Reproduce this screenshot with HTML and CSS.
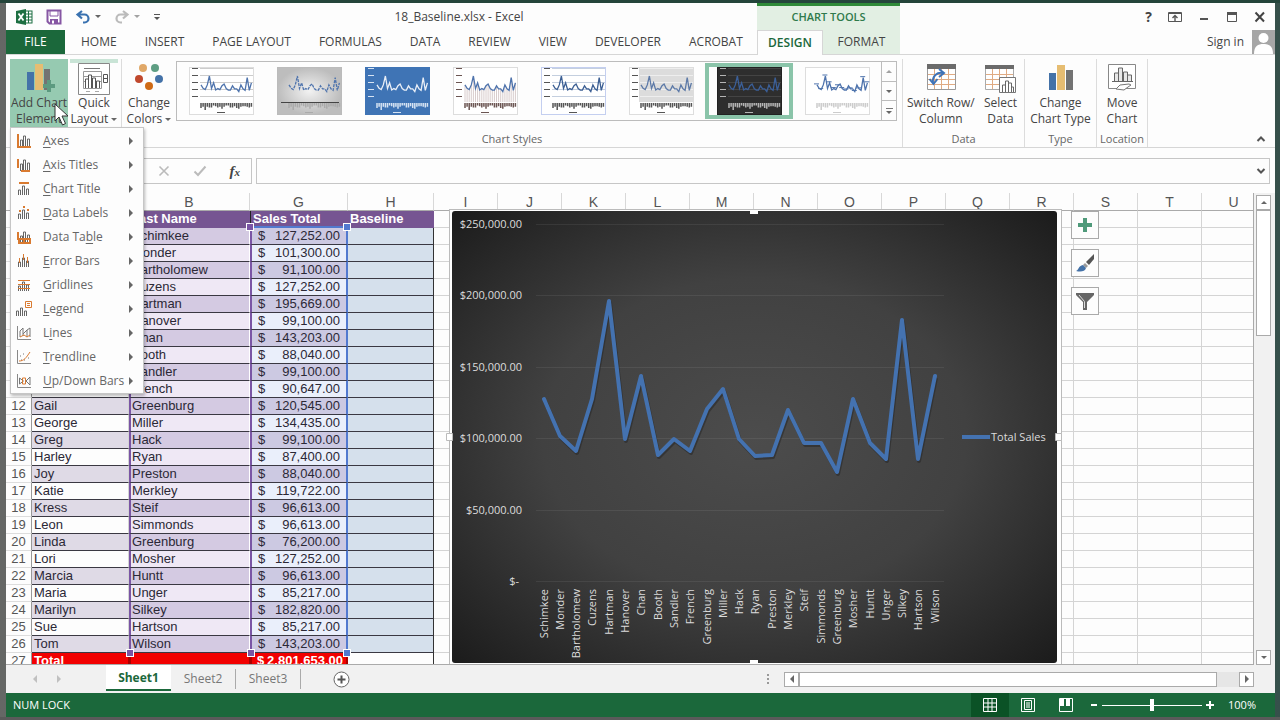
FILE: index.html
```html
<!DOCTYPE html>
<html lang="en">
<head>
<meta charset="utf-8">
<title>18_Baseline.xlsx - Excel</title>
<link rel="stylesheet" href="styles.css">
</head>
<body>
<div class="window">
  <header class="header">
    <div class="titlebar">
      <div class="quick">
        <svg class="app-icon" width="17" height="16" viewBox="0 0 17 16"><rect x="8" y="2" width="8" height="12" fill="#fff" stroke="#1d6f42"/><path d="M9 5h7M9 8h7M9 11h7M12.500 2v12" stroke="#1d6f42" fill="none"/><path d="M0 2l10-2v16L0 14z" fill="#1d6f42"/><path d="M2.500 4.500l5 7M7.500 4.500l-5 7" stroke="#fff" stroke-width="1.800"/></svg>
        <button class="tool" aria-label="Save"><svg width="16" height="16" viewBox="0 0 16 16"><path d="M1.500 1.500h13v13h-11l-2-2z" fill="#fff" stroke="#8656a3" stroke-width="2"/><path d="M4 2h8v5H4z" fill="#fff" stroke="#8656a3"/><path d="M4 10h8v5H4z" fill="#8656a3"/><path d="M6 11.500h2v3H6z" fill="#fff"/></svg></button>
        <button class="tool split" aria-label="Undo"><svg width="16" height="14" viewBox="0 0 16 14"><path d="M7 1L2.500 4.500 7 8.500M3 4.500h6.500a4 4 0 0 1 0 8H8" fill="none" stroke="#3a72b0" stroke-width="2.200"/></svg><i class="down"></i></button>
        <button class="tool split muted" aria-label="Redo"><svg width="16" height="14" viewBox="0 0 16 14"><path d="M9 1l4.500 3.500L9 8.500M13 4.500H6.500a4 4 0 0 0 0 8H8" fill="none" stroke="#909090" stroke-width="2.200"/></svg><i class="down"></i></button>
        <button class="tool" aria-label="Customize Quick Access Toolbar"><svg width="8" height="8" viewBox="0 0 8 8"><path d="M1 1.500h6" stroke="#555"/><path d="M1 4h6L4 7z" fill="#555"/></svg></button>
      </div>
      <div class="doc-title">18_Baseline.xlsx - Excel</div>
    </div>
    <div class="context-title">CHART TOOLS</div>
    <div class="window-tools">
      <button aria-label="Help" class="help">?</button>
      <button aria-label="Ribbon Display Options"><svg width="14" height="12" viewBox="0 0 14 12"><path d="M.500 1.500h13v9H.500z" fill="none" stroke="#555"/><path d="M0 2.500h14" stroke="#555"/><path d="M7 10V5M4.500 7L7 4.500 9.500 7" fill="none" stroke="#555" stroke-width="1.400"/></svg></button>
      <button aria-label="Minimize"><svg width="12" height="12" viewBox="0 0 12 12"><path d="M2 8h8" stroke="#555" stroke-width="2"/></svg></button>
      <button aria-label="Restore"><svg width="12" height="12" viewBox="0 0 12 12"><path d="M1.500 2v8.500h9V2" fill="none" stroke="#555"/><path d="M1 2.500h10" stroke="#555" stroke-width="3"/></svg></button>
      <button aria-label="Close"><svg width="12" height="12" viewBox="0 0 12 12"><path d="M1.500 1.500l8.500 9M10 1.500l-8.500 9" stroke="#444" stroke-width="2"/></svg></button>
    </div>
    <nav class="tabs">
      <button class="tab file">FILE</button><button class="tab">HOME</button><button class="tab">INSERT</button><button class="tab">PAGE LAYOUT</button><button class="tab">FORMULAS</button><button class="tab">DATA</button><button class="tab">REVIEW</button><button class="tab">VIEW</button><button class="tab">DEVELOPER</button><button class="tab">ACROBAT</button>
    </nav>
    <nav class="context-tabs"><button class="tab active">DESIGN</button><button class="tab">FORMAT</button></nav>
    <div class="account"><a href="#signin">Sign in</a><svg width="23" height="24" viewBox="0 0 23 24"><path d="M0 0h23v24H0z" fill="#a6a6a6"/><circle cx="11.500" cy="8" r="5" fill="#fff"/><path d="M2 24c0-8 4-10 9.500-10S21 16 21 24z" fill="#fff"/></svg></div>
  </header>

  <section class="ribbon" aria-label="Chart design">
    <div class="group layouts">
      <div class="commands">
        <div class="menu-host">
          <button class="command pressed" aria-haspopup="true" aria-expanded="true"><svg width="32" height="32" viewBox="0 0 32 32"><path d="M4 11h7v18H4z" fill="#4472a8"/><path d="M12 3h8v26h-8z" fill="#e6bd72"/><path d="M21 8h6v21h-6z" fill="#737373"/><path d="M26 19v12M20 25h12" stroke="#5c9a80" stroke-width="4"/></svg><span>Add Chart<br>Element</span></button>
          <ul class="menu" role="menu" id="menu"></ul>
          <svg class="pointer" width="15" height="24" viewBox="0 0 15 24"><path d="M1 1v17l4-4 3.500 8 3-1.500L8 13h6z" fill="#fff" stroke="#333"/></svg>
        </div>
        <button class="command quick-layout"><svg width="32" height="32" viewBox="0 0 32 32"><path d="M.500.500h31v31H.500z" fill="#fff" stroke="#888"/><path d="M6 5.500h16" stroke="#777"/><path d="M5.500 8.500h18v17h-18zM5.500 13.500h18M5.500 18.500h18" fill="none" stroke="#999"/><path d="M7.500 25v-9h3v9M10.500 25V12h3v13M14.500 25V15h3v10M18.500 25v-7h3v7M25.500 11.500h4v8h-4zM26 15.500h3" fill="#fff" stroke="#555"/><path d="M8 28.500h4M17 28.500h4" stroke="#aaa"/></svg><span>Quick<br>Layout <i class="down"></i></span></button>
      </div>
    </div>
    <div class="group styles">
      <div class="commands">
        <button class="command"><svg width="32" height="32" viewBox="0 0 32 32"><circle cx="10" cy="7" r="4" fill="#e0a868"/><circle cx="22" cy="7" r="4" fill="#5e9e83"/><circle cx="6" cy="18" r="4" fill="#c0482d"/><circle cx="26" cy="18" r="4" fill="#4472a8"/><circle cx="16" cy="25" r="4" fill="#cf6a15"/></svg><span>Change<br>Colors <i class="down"></i></span></button>
        <div class="gallery"><div class="swatches" id="gallery"></div>
          <div class="gallery-scroll"><button aria-label="Previous styles" class="muted"><i class="up"></i></button><button aria-label="Next styles"><i class="down"></i></button><button aria-label="More styles"><i class="bar"></i><i class="down"></i></button></div>
        </div>
      </div>
      <div class="group-label">Chart Styles</div>
    </div>
    <div class="group data">
      <div class="commands">
        <button class="command"><svg width="32" height="32" viewBox="0 0 32 32"><path d="M2.500 3.500h28v25h-28z" fill="#fff" stroke="#999"/><path d="M2 3h29v5H2z" fill="#6b6b6b"/><path d="M3 13.500h27M3 18.500h27M3 23.500h27M9.500 8v20M16.500 8v20M23.500 8v20" stroke="#e0ab83"/><path d="M8 22C7 15 12 11 18 12" fill="none" stroke="#3f73b7" stroke-width="2"/><path d="M14 8l5 4-5 4M4.500 18l4 5 4-5" fill="none" stroke="#3f73b7" stroke-width="2"/></svg><span>Switch Row/<br>Column</span></button>
        <button class="command"><svg width="32" height="32" viewBox="0 0 32 32"><path d="M1.500 4.500h28v24h-28z" fill="#fff" stroke="#aaa"/><path d="M1 4h29v4H1z" fill="#6b6b6b"/><path d="M2 13.500h27M2 18.500h27M2 23.500h27M8.500 8v20M15.500 8v20M22.500 8v20" stroke="#e0ab83"/><path d="M15.500 16.500h16v15h-16z" fill="#fff" stroke="#777"/><path d="M18.500 31v-7h3v7M21.500 31V20h3v11M24.500 31v-9h3v9M27.500 31v-5h2v5" fill="#fff" stroke="#666"/></svg><span>Select<br>Data</span></button>
      </div>
      <div class="group-label">Data</div>
    </div>
    <div class="group type">
      <div class="commands"><button class="command"><svg width="32" height="32" viewBox="0 0 32 32"><path d="M4 12h7v17H4z" fill="#4472a8"/><path d="M12 4h8v25h-8z" fill="#e6bd72"/><path d="M21 9h7v20h-7z" fill="#737373"/></svg><span>Change<br>Chart Type</span></button></div>
      <div class="group-label">Type</div>
    </div>
    <div class="group location">
      <div class="commands"><button class="command"><svg width="32" height="32" viewBox="0 0 32 32"><path d="M2.500 3.500h27v24h-27z" fill="#fff" stroke="#888"/><path d="M8.500 20v-8h4v8M12.500 20V7h4v13M17.500 20v-9h4v9M21.500 20v-6h4v6M6 20.500h21" fill="#e8e8e8" stroke="#666"/><path d="M10 28l4-4 9-1 2 1-3 2-4 3z" fill="#fff" stroke="#777"/></svg><span>Move<br>Chart</span></button></div>
      <div class="group-label">Location</div>
    </div>
    <button class="collapse" aria-label="Collapse the ribbon"><svg width="10" height="8" viewBox="0 0 10 8"><path d="M1.500 6L5 2.500 8.500 6" fill="none" stroke="#555" stroke-width="2"/></svg></button>
  </section>

  <div class="formula-bar">
    <div class="formula-tools">
      <button aria-label="Cancel"><svg width="12" height="12" viewBox="0 0 12 12"><path d="M1.500 1.500l9 9M10.500 1.500l-9 9" stroke="#bbb" stroke-width="1.600"/></svg></button>
      <button aria-label="Enter"><svg width="14" height="12" viewBox="0 0 14 12"><path d="M1.500 6.500L5 10l7.500-8.500" fill="none" stroke="#bbb" stroke-width="2"/></svg></button>
      <button aria-label="Insert Function" class="fx">f<small>x</small></button>
    </div>
    <div class="formula-field"><input type="text" aria-label="Formula"><button aria-label="Expand formula bar"><svg width="10" height="8" viewBox="0 0 10 8"><path d="M1.500 2L5 5.500 8.500 2" fill="none" stroke="#555" stroke-width="2"/></svg></button></div>
  </div>

  <main class="workspace">
    <div class="sheet">
      <table class="cells">
        <colgroup><col class="c-num"><col class="c-a"><col class="c-b"><col class="c-g"><col class="c-h"></colgroup>
        <thead><tr id="columns"></tr></thead>
        <tbody id="rows"></tbody>
      </table>
      <figure class="chart" id="chart"></figure>
      <div class="chart-tools">
        <button aria-label="Chart Elements"><svg width="16" height="16" viewBox="0 0 16 16"><path d="M8 1v14M1 8h14" stroke="#4f9a7a" stroke-width="4"/></svg></button>
        <button aria-label="Chart Styles"><svg width="20" height="18" viewBox="0 0 20 18"><path d="M19 0v5l-5 6-3-3z" fill="#555"/><path d="M10 9l3 3-2 2-3-3z" fill="#999"/><path d="M1 17c3-1 2-5 7-6l3 3c-1 4-6 4-10 3z" fill="#4472a8"/></svg></button>
        <button aria-label="Chart Filters"><svg width="18" height="17" viewBox="0 0 18 17"><path d="M0 0h18v2l-7 7v8H7V9L0 2z" fill="#666"/><path d="M3 2l5.500 6.500V15" fill="none" stroke="#ddd"/></svg></button>
      </div>
    </div>
    <div class="vscroll"><button aria-label="Scroll up"><i class="up"></i></button><div class="v-thumb"></div><div class="v-track"></div><button aria-label="Scroll down"><i class="down"></i></button></div>
  </main>

  <div class="sheet-bar">
    <div class="sheet-nav"><button aria-label="Previous sheet"><i class="left"></i></button><button aria-label="Next sheet"><i class="right"></i></button></div>
    <button class="sheet-tab current">Sheet1</button><button class="sheet-tab">Sheet2</button><button class="sheet-tab">Sheet3</button>
    <button class="add-sheet" aria-label="New sheet"><svg width="17" height="17" viewBox="0 0 17 17"><circle cx="8.500" cy="8.500" r="7.500" fill="#fff" stroke="#666"/><path d="M8.500 4.500v8M4.500 8.500h8" stroke="#555" stroke-width="2"/></svg></button>
    <svg class="grip" width="4" height="13" viewBox="0 0 4 13"><path d="M1 1h2v2H1zM1 5h2v2H1zM1 9h2v2H1z" fill="#999"/></svg>
    <div class="hscroll"><button aria-label="Scroll left"><i class="left"></i></button><div class="h-thumb"></div><div class="h-track"></div><button aria-label="Scroll right"><i class="right"></i></button></div>
  </div>

  <footer class="status">
    <span>NUM LOCK</span>
    <div class="views">
      <button class="on" aria-label="Normal"><svg width="14" height="14" viewBox="0 0 14 14"><path d="M.500.500h13v13H.500zM.500 5h13M.500 9h13M5 .500v13M9 .500v13" fill="none" stroke="#fff"/></svg></button>
      <button aria-label="Page Layout"><svg width="14" height="14" viewBox="0 0 14 14"><path d="M.500.500h13v13H.500zM3.500 2.500h7v9h-7zM5 5h4M5 7h4M5 9h4" fill="none" stroke="#fff"/></svg></button>
      <button aria-label="Page Break Preview"><svg width="14" height="14" viewBox="0 0 14 14"><path d="M.500.500h13v13H.500z" fill="none" stroke="#fff"/><path d="M1 1h4v7H1zM7 1h4v7H7z" fill="#fff"/></svg></button>
    </div>
    <div class="zoom"><button aria-label="Zoom out"><svg width="8" height="8" viewBox="0 0 8 8"><path d="M1 4h6" stroke="#fff" stroke-width="2"/></svg></button><input type="range" min="0" max="200" value="100" aria-label="Zoom"><button aria-label="Zoom in"><svg width="8" height="8" viewBox="0 0 8 8"><path d="M0 4h8M4 0v8" stroke="#fff" stroke-width="2"/></svg></button><button class="percent">100%</button></div>
  </footer>
</div>
<script src="app.js"></script>
</body>
</html>
```

FILE: styles.css
```css
* { box-sizing: border-box; }
body {
  margin: 0;
  padding: 3px 5px 3px 6px;
  height: 100vh;
  background: linear-gradient(to bottom, #24453b 3px, transparent 3px, transparent calc(100% - 3px), #5a5a5a calc(100% - 3px)), linear-gradient(to right, #656765, #36504b);
  font: 12px/16px "Open Sans", "Noto Sans", sans-serif;
  color: #444;
}
button { font: inherit; color: inherit; background: none; border: 0; padding: 0; margin: 0; }
button svg, .account svg { display: block; }
a { color: inherit; text-decoration: none; }
.window { height: 100%; display: flex; flex-direction: column; background: #fdfdfd; }

.up, .down, .left, .right { display: inline-block; width: 0; height: 0; border: 3px solid transparent; }
.down { border-top-color: #666; border-bottom: 0; vertical-align: 2px; }
.up { border-bottom-color: #666; border-top: 0; }
.left { border-right-color: #666; border-left: 0; border-width: 4px; border-left-width: 0; }
.right { border-left-color: #666; border-width: 4px; border-right-width: 0; }
.muted { opacity: .6; }

/* title bar and ribbon tabs */
.header { display: grid; grid-template-columns: 751fr 143px 375fr; grid-template-rows: 27px 24px; border-bottom: 1px solid #d6d6d6; }
.titlebar { display: flex; align-items: center; }
.quick { display: flex; align-items: center; gap: 13px; padding-left: 10px; }
.tool { display: flex; align-items: center; }
.split { gap: 4px; }
.doc-title { flex: 1; text-align: center; }
.context-title { background: #e2efe3; border-top: 3px solid #2e8a38; color: #2f7a4b; text-align: center; line-height: 22px; font-size: 11px; font-weight: 600; }
.window-tools { display: flex; justify-content: flex-end; align-items: center; gap: 16px; padding-right: 9px; }
.help { font-weight: 700; font-size: 14px; }
.tabs { display: flex; }
.tab { padding: 0 14px; line-height: 24px; white-space: nowrap; }
.file { background: #1b683b; color: #fff; width: 59px; margin-right: 2px; }
.context-tabs { display: flex; background: #e2efe3; }
.context-tabs .tab { flex: 1; padding: 0; }
.context-tabs .active { flex: 0 0 66px; background: #fdfdfd; color: #1b683b; font-weight: 600; border: 1px solid #d6d6d6; border-bottom: 0; margin-bottom: -1px; }
.account { display: flex; justify-content: flex-end; align-items: center; gap: 8px; }

/* ribbon */
.ribbon { display: flex; height: 93px; border-bottom: 1px solid #d6d6d6; position: relative; }
.group { display: flex; flex-direction: column; border-right: 1px solid #dcdcdc; margin-top: 4px; }
.commands { display: flex; flex: 1; }
.group-label { text-align: center; color: #666; font-size: 11px; }
.command { display: flex; flex-direction: column; align-items: center; gap: 2px; padding: 2px 3px 0; white-space: nowrap; align-self: flex-start; }
.layouts { padding: 0 3px 0 4px; }
.layouts .commands { gap: 2px; }
.menu-host { position: relative; }
.pressed { background: #96cab1; width: 58px; height: 70px; }
.quick-layout { width: 48px; border-top: 4px solid #c9e4d6; padding-top: 0; gap: 0; }
.styles { flex: 0 1 781px; }
.styles .command { width: 54px; }
.gallery { display: flex; border: 1px solid #bcbcbc; height: 60px; margin-top: 2px; flex: 0 1 721px; }
.swatches { display: flex; flex: 1; }
.swatch { flex: 1 1 0; min-width: 0; display: flex; align-items: center; justify-content: center; }
.swatch.chosen { box-shadow: inset 0 0 0 4px #8ac4a9; margin: 1px 0; }
.gallery-scroll { width: 15px; display: flex; flex-direction: column; border-left: 1px solid #bcbcbc; }
.gallery-scroll button { flex: 1; display: flex; flex-direction: column; gap: 2px; align-items: center; justify-content: center; }
.gallery-scroll button + button { border-top: 1px solid #bcbcbc; }
.bar { width: 7px; height: 1px; background: #777; }
.data { flex: 0 0 122px; }
.data .commands { justify-content: space-between; padding: 0 4px 0 1px; }
.type { flex: 0 0 72px; }
.location { flex: 0 0 51px; }
.type .commands, .location .commands { justify-content: center; }
.collapse { margin: 0 9px 4px auto; align-self: flex-end; }

.menu { position: absolute; z-index: 5; top: 68px; left: 0; width: 134px; margin: 0; padding: 1px 0 0; list-style: none; background: #fdfdfd; border: 1px solid #c6c6c6; box-shadow: 1px 2px 3px #0004; color: #666; }
.menu button { display: grid; grid-template-columns: 27px 86px 4px; width: 100%; height: 24px; align-items: center; text-align: left; padding-left: 5px; white-space: nowrap; }
.menu u { text-underline-offset: 2px; }
.pointer { position: absolute; z-index: 6; left: 44px; top: 44px; }

/* formula bar */
.formula-bar { display: flex; gap: 4px; padding: 10px 5px 9px 25px; height: 45px; }
.formula-tools { flex: 0 0 221px; display: flex; justify-content: flex-end; align-items: center; gap: 23px; border: 1px solid #c6c6c6; padding-right: 11px; }
.fx { font: italic 700 15px/16px "Liberation Serif", serif; }
.fx small { font-size: 11px; }
.formula-field { flex: 1; display: flex; border: 1px solid #c6c6c6; }
.formula-field input { flex: 1; border: 0; background: none; font: inherit; }
.formula-field button { padding: 0 3px; }

/* worksheet */
.workspace { flex: 1; min-height: 0; display: flex; }
.sheet { flex: 1; min-width: 0; position: relative; overflow: hidden; border-right: 1px solid #aaa; border-bottom: 1px solid #aaa; }
.cells { table-layout: fixed; border-collapse: separate; border-spacing: 0; width: 0; font: 13px/16px "Liberation Sans", Arial, sans-serif; color: #2b2836; }
.c-num { width: 26px; }
.c-a { width: 97px; }
.c-b { width: 121px; }
.c-g { width: 98px; }
.c-h { width: 86px; }
.cells col.c-x { width: 64px; }
.cells th, .cells td { height: 17px; padding: 0; white-space: nowrap; overflow: hidden; }
.cells thead th { height: 18px; font-weight: 400; font-size: 14px; color: #555; border-right: 1px solid #d8d8d8; border-bottom: 1px solid #aaa; }
.cells tbody th { font-weight: 400; color: #555; border-right: 1px solid #999; border-bottom: 1px solid #ddd; text-align: center; }
.cells td { border-right: 1px solid #d4d4d4; border-bottom: 1px solid #d4d4d4; }
.cells .in { border-bottom-color: #3a3842; padding-left: 2px; position: relative; }
.cells .h { border-right-color: #333; background: #d5e0ec; }
.a { background: #fdfdfd; }
.b { background: #efe8f5; }
.g { background: #eaeffb; }
.even .a { background: #dfdae6; }
.even .b { background: #d4cae2; }
.even .g { background: #ccc9e2; }
.cells .b { border-left: 2px solid #7a55a5; border-right: 1px solid #fff; padding-left: 1px; }
.cells .g { border-left: 2px solid #7a55a5; border-right: 2px solid #5279cf; }
.cells .g div { display: flex; justify-content: space-between; padding: 0 6px 0 4px; }
.cells .title td.in { background: #765592; color: #fff; font-weight: 700; border-color: #765592; }
.cells .title td.b, .cells .title td.g { border-left: 1px solid #222; }
.cells .title td.g { border-bottom: 2px solid #5279cf; line-height: 15px; }
.cells .total td { font-weight: 700; color: #fff; }
.cells .total .a, .cells .total .b, .cells .total .g { background: #f20000; border-color: #a00; }
.cells .total .g div { padding: 0 3px; gap: 1px; }
.cells .total .h { background: #fdfdfd; }
.cells .mark { overflow: visible; }
.mark::before, .mark::after { content: ""; position: absolute; z-index: 1; width: 6px; height: 6px; bottom: -4px; left: -4px; background: #7a55a5; outline: 1px solid #fff; }
.mark::after { left: auto; right: -4px; background: #5279cf; }
.b.mark::after, .title .b.mark::before { display: none; }

.chart { position: absolute; z-index: 2; margin: 0; left: 443px; top: 16px; width: 613px; border: 1px solid #bbb; padding: 1px 4px 1px 2px; background: #fff; }
.chart svg { display: block; width: 100%; overflow: visible; }
.chart text { font: 11px "Open Sans", sans-serif; fill: #dcdcdc; }
.chart-tools { position: absolute; z-index: 2; left: 1065px; top: 18px; display: flex; flex-direction: column; gap: 10px; }
.chart-tools button { width: 28px; height: 28px; border: 1px solid #aaa; background: #fdfdfd; display: flex; align-items: center; justify-content: center; }

.vscroll { width: 21px; padding: 2px 4px 0 2px; background: #f1f1f1; display: flex; flex-direction: column; }
.vscroll button, .hscroll button { border: 1px solid #aaa; background: #fff; width: 15px; height: 15px; flex: none; display: flex; align-items: center; justify-content: center; }
.v-thumb { height: 126px; background: #fff; border: 1px solid #aaa; }
.v-track { flex: 1; }

.sheet-bar { display: flex; height: 28px; background: #f1f1f1; align-items: center; color: #777; }
.sheet-nav { width: 100px; display: flex; gap: 20px; padding-left: 27px; opacity: .35; }
.sheet-tab { width: 65px; height: 20px; border-right: 1px solid #aaa; }
.sheet-tab.current { background: #fff; color: #1b683b; font-weight: 700; height: 26px; padding-top: 2px; border: 0; border-bottom: 2px solid #1b683b; align-self: flex-start; }
.add-sheet { margin-left: 32px; }
.grip { margin-left: auto; }
.hscroll { display: flex; width: 470px; margin: 0 21px 0 14px; background: #e6e6e6; }
.h-thumb { flex: 1; background: #fff; border: 1px solid #aaa; }
.h-track { width: 22px; }

.status { height: 24px; background: #1b683b; color: #fff; display: flex; align-items: center; font-size: 11px; padding: 0 19px 0 7px; }
.views { margin-left: auto; display: flex; height: 24px; }
.views button { width: 38px; display: flex; align-items: center; justify-content: center; }
.views .on { background: #0b5226; }
.zoom { display: flex; align-items: center; margin-left: 5px; }
.zoom input { appearance: none; width: 100px; height: 14px; margin: 0 4px; background: linear-gradient(#fff, #fff) center / 100% 1px no-repeat; }
.zoom input::-webkit-slider-thumb { appearance: none; width: 4px; height: 12px; background: #fff; }
.percent { margin-left: 14px; }
```

FILE: app.js
```js
const sales = [
  ["", "Schimkee", 127252], ["", "Monder", 101300], ["", "Bartholomew", 91100], ["", "Cuzens", 127252],
  ["", "Hartman", 195669], ["", "Hanover", 99100], ["", "Chan", 143203], ["", "Booth", 88040],
  ["", "Sandler", 99100], ["", "French", 90647], ["Gail", "Greenburg", 120545], ["George", "Miller", 134435],
  ["Greg", "Hack", 99100], ["Harley", "Ryan", 87400], ["Joy", "Preston", 88040], ["Katie", "Merkley", 119722],
  ["Kress", "Steif", 96613], ["Leon", "Simmonds", 96613], ["Linda", "Greenburg", 76200], ["Lori", "Mosher", 127252],
  ["Marcia", "Huntt", 96613], ["Maria", "Unger", 85217], ["Marilyn", "Silkey", 182820], ["Sue", "Hartson", 85217],
  ["Tom", "Wilson", 143203]
];
const byId = id => document.getElementById(id);
const money = v => v.toLocaleString("en-US", { minimumFractionDigits: 2 });
const extra = "IJKLMNOPQRSTU".split("");

// Worksheet
const cols = document.querySelector("colgroup");
cols.innerHTML += extra.map(() => '<col class="c-x">').join("");
byId("columns").innerHTML = ["", "", "B", "G", "H", ...extra].map(c => `<th scope="col">${c}</th>`).join("");
const blanks = extra.map(() => "<td></td>").join("");
const row = (n, cls, a, b, g, h, mark = "") =>
  `<tr class="${cls}"><th scope="row">${n}</th><td class="in a">${a}</td><td class="in b ${mark}">${b}</td><td class="in g ${mark}">${g}</td><td class="in h">${h}</td>${blanks}</tr>`;
const pair = v => `<div><span>$</span><span>${money(v)}</span></div>`;
byId("rows").innerHTML =
  row(1, "title", "", "Last Name", "Sales Total", "Baseline", "mark") +
  sales.map(([a, b, v], i) => row(i + 2, i % 2 ? "" : "even", a, b, pair(v), "", i === 24 ? "mark" : "")).join("") +
  row(27, "total", "Total", "", pair(2801653), "");

// Chart
const px = i => Math.round(91.5 + i * 16.3);
const py = v => Math.round(370 - v * 0.00143);
const points = sales.map((s, i) => `${px(i)},${py(s[2])}`).join(" ");
const axis = [0, 50000, 100000, 150000, 200000, 250000].map(v =>
  `<path d="M84 ${py(v) + 0.5}H492" stroke="#fff" stroke-opacity=".07"/><text x="70" y="${py(v) + 4}" text-anchor="end">${v ? "$" + money(v) : "$-&#160;"}</text>`).join("");
const names = sales.map((s, i) => `<text transform="translate(${px(i) + 4} 378) rotate(-90)" text-anchor="end">${s[1]}</text>`).join("");
byId("chart").innerHTML = `<svg viewBox="0 0 605 452" role="img" aria-label="Total Sales line chart">
  <defs><radialGradient id="back" cx=".5" cy=".5" r=".7"><stop offset="0" stop-color="#4c4c4c"/><stop offset=".5" stop-color="#414141"/><stop offset="1" stop-color="#1c1c1c"/></radialGradient></defs>
  <rect width="605" height="452" rx="3" fill="url(#back)"/>${axis}
  <polyline points="${points}" transform="translate(1 2)" fill="none" stroke="#2a2a2a" stroke-opacity=".6" stroke-width="4" stroke-linejoin="round"/>
  <polyline points="${points}" fill="none" stroke="#4472b0" stroke-width="4" stroke-linecap="round" stroke-linejoin="round"/>
  ${names}<path d="M510 226h28" stroke="#4472b0" stroke-width="4"/><text x="539" y="230">Total Sales</text>
  <path d="M298 0h8v3h-8zM298 449h8v3h-8z" fill="#fff"/><path d="M603.500 222.500h6v7h-6zM-5.500 222.500h6v7h-6z" fill="#fff" stroke="#bbb"/></svg>`;

// Chart style gallery
const looks = [
  { bg: "#fff", line: "#4f74ad", text: "#555", grid: "#ccc", edge: "#ddd" },
  { bg: "url(#silver)", line: "#4f74ad", text: "#aaa", grid: "none", edge: "#bbb", dash: "3 1", rule: true },
  { bg: "#3f74b5", line: "#e8eef7", text: "#d6e3f3", grid: "none", edge: "#3f74b5" },
  { bg: "#fff", line: "#4f74ad", text: "#6b5552", grid: "none", edge: "#ddd", drops: "#d8cccc" },
  { bg: "#fff", line: "#3c5f94", text: "#555", grid: "#c4cfdf", edge: "#c4cff0" },
  { bg: "#fff", line: "#5d7aa8", text: "#555", grid: "#eee", edge: "#ddd", shade: "#dcdcdc" },
  { bg: "#2e2e2e", line: "#3b5f98", text: "#b5b5b5", grid: "#444", edge: "#222" },
  { bg: "#fff", line: "#4f74ad", text: "#ccc", grid: "none", edge: "#ddd", tags: true }
];
const tx = i => 12 + i * 2.1;
const ty = v => 9 + (195669 - v) * 0.00013;
const thumbnail = s => {
  const line = sales.map((r, i) => `${tx(i)},${ty(r[2])}`).join(" ");
  const bars = sales.map((r, i) => `M${tx(i)} 36v${r[1].length / 1.6}`).join("");
  const drops = sales.map((r, i) => `M${tx(i)} ${ty(r[2])}V35`).join("");
  const tags = sales.map((r, i) => i % 2 ? "" : `M${tx(i) - 3} ${ty(r[2]) - 1}h5`).join("");
  return `<svg width="65" height="48" viewBox="0 0 65 48">
  ${s.rule ? '<radialGradient id="silver"><stop offset="0" stop-color="#f2f2f2"/><stop offset="1" stop-color="#bdbdbd"/></radialGradient>' : ""}
  <rect x=".5" y=".5" width="64" height="47" fill="${s.bg}" stroke="${s.edge}"/>
  ${s.shade ? `<path d="M10 1h54v34H10z" fill="${s.shade}"/>` : ""}
  <path d="M11 1.500h53M11 8.500h53M11 15.500h53M11 22.500h53M11 29.500h53" stroke="${s.grid}"/>
  ${s.tags || s.rule ? "" : `<path d="M3 1.500h6M3 8.500h6M3 15.500h6M3 22.500h6M3 29.500h6" stroke="${s.text}"/>`}
  ${s.drops ? `<path d="${drops}" stroke="${s.drops}"/>` : ""}${s.rule ? '<path d="M4 35.500h58" stroke="#444"/>' : ""}
  <polyline points="${line}" fill="none" stroke="${s.line}" stroke-width="1.300" stroke-dasharray="${s.dash || "none"}"/>
  ${s.tags ? `<path d="${tags}" stroke="${s.line}"/>` : ""}<path d="${bars}" stroke="${s.text}" stroke-width="1.500"/><path d="M28 45.500h8" stroke="${s.text}"/></svg>`;
};
byId("gallery").innerHTML = looks.map((s, i) => `<button class="swatch${i === 6 ? " chosen" : ""}" aria-label="Style ${i + 1}">${thumbnail(s)}</button>`).join("");

// Add Chart Element menu
const orange = d => `<path d="${d}" stroke="#d97a30" stroke-width="2" fill="none"/>`;
const bars = '<path d="M4.500 14V7h2v7M7.500 14V3h2v11M11.500 14V6h2v8" fill="#fff" stroke="#666"/>';
const small = '<path d="M2.500 14V9h2v5M6.500 14V5h2v9M10.500 14V8h2v6" fill="#fff" stroke="#666"/>';
const frame = '<path d="M1.500 1v13.500H15" fill="none" stroke="#888"/>';
const entries = [
  ["<u>A</u>xes", bars + orange("M2 1v13H15")],
  ["<u>A</u>xis Titles", bars + orange("M2 2v9M5 14h9") ],
  ["<u>C</u>hart Title", small + orange("M3 2h10")],
  ["<u>D</u>ata Labels", small + orange("M3 6h2M7 2h2M11 5h2")],
  ["Data Ta<u>b</u>le", bars + orange("M2 3v8M3 10h11v4H3zM8 10v4")],
  ["<u>E</u>rror Bars", small + '<path d="M3.500 5v5M7.500 1v6M11.500 4v6" stroke="#d97a30"/>'],
  ["<u>G</u>ridlines", small + '<path d="M2 3.500h12M2 7.500h12M2 11.500h12" stroke="#d97a30"/>'],
  ["<u>L</u>egend", '<path d="M.500 15v-5h2v5M4.500 15V7h2v8M8.500 15v-5h2v5" fill="#fff" stroke="#666"/><path d="M9.500.500h6v6h-6zM11 2.500h3M11 4.500h3" fill="none" stroke="#d97a30"/>'],
  ["L<u>i</u>nes", frame + '<path d="M4 12V6l3-3v8M7 9l4-4v7M11 5l3-2v9" fill="none" stroke="#777"/><path d="M4 12l4-2 3 2 3-2" fill="none" stroke="#d97a30"/>'],
  ["<u>T</u>rendline", frame + '<path d="M4 7h1M7 5h1M8 11h1M12 9h1M5 11h1" stroke="#777"/><path d="M3 12c5 0 7-3 11-9" fill="none" stroke="#d97a30"/>'],
  ["<u>U</u>p/Down Bars", frame + '<path d="M3.500 5l4 3-4 3zM14 4l-4 4 4 4z" fill="none" stroke="#777"/><path d="M6.500 5h3v6h-3z" fill="none" stroke="#d97a30"/>']
];
byId("menu").innerHTML = entries.map(([label, art]) =>
  `<li role="none"><button role="menuitem"><svg width="16" height="16" viewBox="0 0 16 16">${art}</svg><span>${label}</span><i class="right"></i></button></li>`).join("");
```
